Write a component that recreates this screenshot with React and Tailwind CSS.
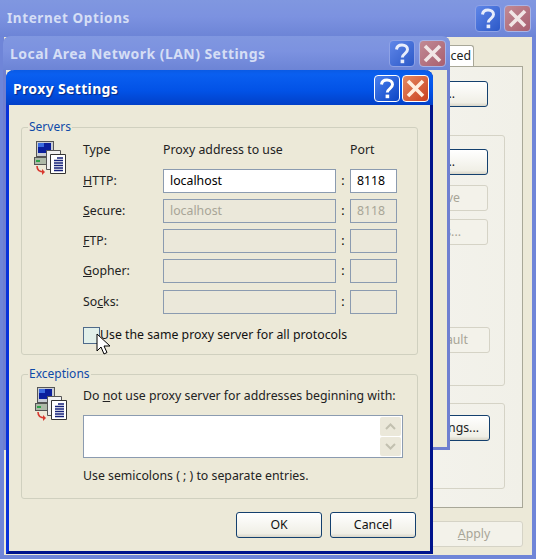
const UI = '[font-family:"Noto_Sans","DejaVu_Sans",sans-serif]';

function Help({ dim }) {
  return (
    <div className={`flex h-[27px] w-[26px] items-center justify-center rounded-[4px] border ${dim ? 'border-[#8ea2e6] bg-[linear-gradient(135deg,#5f86e8,#2c59c8)]' : 'border-white bg-[linear-gradient(135deg,#4a80ee,#0c45c4)]'}`}>
      <svg width="16" height="21" viewBox="0 0 16 21" fill="none">
        <path d="M2.5 6.5C2.8 3.500 5 2 8 2c3.200 0 5.500 1.800 5.500 4.600 0 4-5.200 4-5.200 8" stroke={dim ? '#e8edfb' : '#ffffff'} strokeWidth="3" />
        <rect x="6.6" y="16.6" width="3.6" height="3.6" fill={dim ? '#e8edfb' : '#ffffff'} />
      </svg>
    </div>
  );
}

function Close({ dim }) {
  return (
    <div className={`flex h-[27px] w-[27px] items-center justify-center rounded-[4px] border ${dim ? 'border-[#a8b4e6] bg-[linear-gradient(135deg,#c28a94,#a85f70)]' : 'border-white bg-[linear-gradient(135deg,#e58a62,#c9401f)]'}`}>
      <svg width="21" height="21" viewBox="0 0 21 21">
        <path d="M3 3l15 15M18 3L3 18" stroke={dim ? '#f1e6e6' : '#ffeede'} strokeWidth="3.6" />
      </svg>
    </div>
  );
}

function Title({ text, dim, className, gap, textClass }) {
  return (
    <div className={`flex items-center justify-between ${className}`}>
      <span className={`${UI} font-bold ${textClass} ${dim ? 'text-[#d5def5]' : 'text-white [text-shadow:1px_1px_1px_#0a2a80]'}`}>{text}</span>
      <div className={`flex items-center ${gap}`}>
        <Help dim={dim} />
        <Close dim={dim} />
      </div>
    </div>
  );
}

function ProxyIcon({ className }) {
  return (
    <svg width="34" height="34" viewBox="0 0 34 34" className={`shrink-0 ${className}`}>
      <rect x="3.500" y="0.500" width="17" height="15" fill="#c8ccd4" stroke="#555" />
      <rect x="5" y="2" width="13" height="10" fill="#0a1e9c" />
      <rect x="5" y="2" width="6" height="4" fill="#3a6ae0" />
      <rect x="1.500" y="16.500" width="18" height="7" fill="#aeb9a8" stroke="#555" />
      <rect x="3" y="19" width="4" height="2" fill="#2fa24a" />
      <path d="M4 25c0 4 3 6 7 6" fill="none" stroke="#d8392f" strokeWidth="1.600" />
      <path d="M9 28l3 3-3 3z" fill="#d8392f" />
      <path d="M13.500 9.500h14v19h-14z" fill="#f0f0f0" stroke="#555" />
      <path d="M17.500 13.500h15v19h-15z" fill="#ffffff" stroke="#333" />
      <path d="M24 17h6M21 19.500h9M21 22h9M21 24.500h9M21 27h9M21 29.500h9" stroke="#14207a" strokeWidth="1.300" />
    </svg>
  );
}

function Field({ value, on, w }) {
  return (
    <div className={`flex h-[24px] items-center border border-[#8b9bb0] px-[6px] text-[12.3px] ${w} ${on ? 'bg-white text-black' : 'bg-[#ebe8da] text-[#a8a597]'}`}>
      {value}
    </div>
  );
}

function Row({ label, value, port, on, mt }) {
  return (
    <div className={`flex items-center ${mt}`}>
      <span className="w-[80px] text-[12.3px] text-[#222]">{label}</span>
      <Field value={value} on={on} w="w-[173px]" />
      <span className="w-[14px] text-center text-[12.3px] text-black">:</span>
      <Field value={port} on={on} w="w-[47px]" />
    </div>
  );
}

function XpButton({ children, className }) {
  return (
    <div className={`flex h-[26px] items-center justify-center rounded-[3px] border border-[#14406e] bg-[linear-gradient(#ffffff,#f0efe6_85%,#d8d5c8)] text-[12.3px] text-[#111] ${className}`}>
      {children}
    </div>
  );
}

function BackButton({ children, off, className }) {
  return (
    <div className={`flex h-[26px] items-center rounded-[3px] border text-[12.3px] ${off ? 'border-[#d5d3c6] bg-[#f3f2ea] text-[#a8a597]' : 'border-[#14406e] bg-[linear-gradient(#ffffff,#f0efe6_85%,#d8d5c8)] text-[#222]'} ${className}`}>
      {children}
    </div>
  );
}

const titleDim = 'bg-[linear-gradient(#8097e0,#7c92e0_45%,#6c84d6)]';

function InternetOptions() {
  return (
    <div className="absolute inset-0 flex flex-col bg-[#6f85d8]">
      <Title text="Internet Options" dim gap="gap-[3px]" textClass="text-[13.5px] tracking-[0.6px]" className={`h-[37px] shrink-0 pb-[1px] pl-[7px] pr-[5px] ${titleDim}`} />
      <div className="mx-[4px] mb-[4px] flex flex-1 flex-col bg-[#ece9d8] pl-[8px] pr-[9px]">
        <div className="flex h-[29px] shrink-0 items-end justify-end pr-[49px]">
          <div className="flex h-[21px] items-center rounded-t-[3px] border border-b-0 border-[#a8a798] bg-white px-[2px] text-[12.3px] text-[#222]">Advanced</div>
        </div>
        <div className="flex h-[442px] flex-col items-end border border-[#a8a798] bg-[linear-gradient(90deg,#fcfcfc,#f1f0e8)] pr-[34px] pt-[14px]">
          <BackButton className="mb-[43px] w-[100px] justify-end pr-[32px]">...</BackButton>
          <div className="-mr-[17px] mt-[-15px] flex h-[251px] w-[300px] flex-col items-end rounded-[3px] border border-[#d5d3c6] pr-[16px] pt-[13px]">
            <BackButton className="w-[100px] justify-end pr-[32px]">...</BackButton>
            <BackButton off className="mt-[10px] w-[100px] justify-end pr-[27px]">Remove</BackButton>
            <BackButton off className="mt-[8px] w-[100px] justify-end pr-[26px]">Settings...</BackButton>
            <BackButton off className="mr-[-2px] mt-[82px] w-[102px] justify-end pr-[21px]">Default</BackButton>
          </div>
          <div className="-mr-[17px] mt-[17px] flex h-[86px] w-[300px] flex-col items-end rounded-[3px] border border-[#d5d3c6] pr-[14px] pt-[11px]">
            <BackButton className="w-[100px] justify-end pr-[10px]">LAN settings...</BackButton>
          </div>
        </div>
        <div className="mt-[13px] flex justify-end">
          <BackButton off className="w-[98px] justify-center"><span><span className="underline">A</span>pply</span></BackButton>
        </div>
      </div>
    </div>
  );
}

function LanWindow() {
  return (
    <div className="absolute left-[3px] top-[36px] flex h-[414px] w-[447px] flex-col rounded-t-[8px] bg-[#6f7fd0]">
      <Title text="Local Area Network (LAN) Settings" dim gap="gap-[4px]" textClass="text-[14px] tracking-[0.45px]" className={`h-[34px] shrink-0 rounded-t-[8px] pl-[7px] pr-[4px] ${titleDim}`} />
      <div className="mx-[3px] mb-[3px] flex-1 bg-[#ece9d8]" />
    </div>
  );
}

function ProxyWindow() {
  return (
    <div className={`${UI} absolute left-[6px] top-[70px] flex h-[484px] w-[427px] flex-col rounded-t-[8px] border-x-[3px] border-b-[3px] border-b-[#00148c] border-l-[#0831d9] border-r-[#00148c] bg-[#ece9d8]`}>
      <Title text="Proxy Settings" gap="gap-[2px]" textClass="text-[14px] tracking-[0.35px]" className="-mx-[3px] h-[35px] shrink-0 rounded-t-[8px] bg-[linear-gradient(#0a5ae4,#0a5ff0_12%,#0252e6_60%,#0240c8)] pl-[7px] pr-[4px] pt-[2px]" />
      <div className="flex flex-col px-[12px] pt-[14px]">
        <fieldset className="relative h-[236px] rounded-[3px] border border-[#d0d0bf] pl-[11px] pr-[16px]">
          <legend className="-ml-[5px] px-[1px] text-[12px] leading-[16px] text-[#0f4aa8]">Servers</legend>
          <div className="flex">
            <ProxyIcon className="mt-[6px]" />
            <div className="ml-[16px] flex flex-col">
              <div className="mt-[6px] flex h-[18px] items-center text-[12.3px] text-[#222]">
                <span className="w-[80px]">Type</span>
                <span className="w-[187px]">Proxy address to use</span>
                <span>Port</span>
              </div>
              <Row label={<><span className="underline">H</span>TTP:</>} value="localhost" port="8118" on mt="mt-[10px]" />
              <Row label={<><span className="underline">S</span>ecure:</>} value="localhost" port="8118" mt="mt-[6px]" />
              <Row label={<><span className="underline">F</span>TP:</>} mt="mt-[6px]" />
              <Row label={<><span className="underline">G</span>opher:</>} mt="mt-[6px]" />
              <Row label={<>So<span className="underline">c</span>ks:</>} mt="mt-[7px]" />
              <div className="mt-[12px] flex items-center">
                <div className="h-[17px] w-[17px] border border-[#4f6a8a] bg-[#e2f0ea]" />
                <span className="text-[12.3px] text-[#111]">Use the same proxy server for all protocols</span>
              </div>
            </div>
          </div>
          <svg width="15" height="23" viewBox="0 0 15 23" className="absolute left-[74px] top-[198px]">
            <path d="M1 1v17l4-4 3 7 3-1.500-3-6.500h6z" fill="#fff" stroke="#000" />
          </svg>
        </fieldset>
        <fieldset className="mt-[11px] h-[133px] rounded-[3px] border border-[#d0d0bf] pl-[12px] pr-[10px]">
          <legend className="-ml-[6px] px-[1px] text-[12px] leading-[16px] text-[#0f4aa8]">Exceptions</legend>
          <div className="flex">
            <ProxyIcon className="mt-[5px]" />
            <div className="ml-[15px] flex flex-1 flex-col">
              <span className="mt-[5px] text-[12.3px] leading-[18px] text-[#222]">Do <span className="underline">n</span>ot use proxy server for addresses beginning with:</span>
              <div className="mt-[10px] flex h-[43px] w-[320px] justify-end border border-[#8b9bb0] bg-white p-[1px]">
                <div className="flex w-[21px] flex-col gap-[1px]">
                  <div className="flex flex-1 items-center justify-center rounded-[2px] bg-[#ebe8da]">
                    <svg width="11" height="7" viewBox="0 0 11 7"><path d="M1 6l4.500-4.500L10 6" fill="none" stroke="#c2c0b0" strokeWidth="2" /></svg>
                  </div>
                  <div className="flex flex-1 items-center justify-center rounded-[2px] bg-[#ebe8da]">
                    <svg width="11" height="7" viewBox="0 0 11 7"><path d="M1 1l4.500 4.500L10 1" fill="none" stroke="#c2c0b0" strokeWidth="2" /></svg>
                  </div>
                </div>
              </div>
              <span className="mt-[9px] text-[12.3px] leading-[18px] text-[#222]">Use semicolons ( ; ) to separate entries.</span>
            </div>
          </div>
        </fieldset>
        <div className="mt-[13px] flex justify-end gap-[8px] pr-[2px]">
          <XpButton className="w-[86px]">OK</XpButton>
          <XpButton className="w-[86px]">Cancel</XpButton>
        </div>
      </div>
    </div>
  );
}

export default function App() {
  return (
    <div className={`${UI} relative h-[559px] w-[536px] overflow-hidden`}>
      <InternetOptions />
      <LanWindow />
      <ProxyWindow />
    </div>
  );
}
